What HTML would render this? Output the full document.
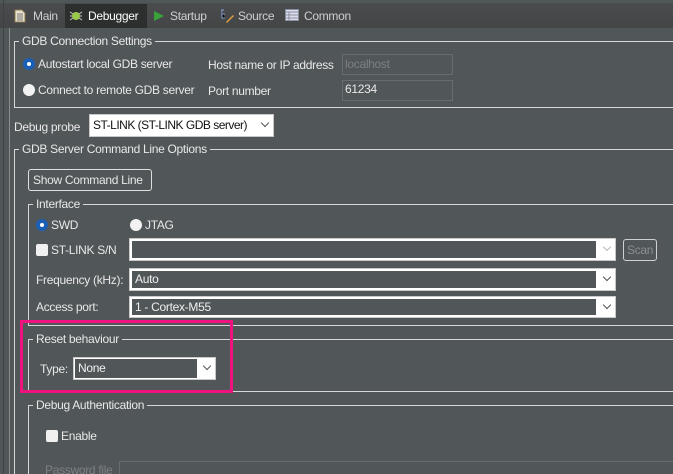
<!DOCTYPE html><html><head><style>
*{margin:0;padding:0;box-sizing:border-box}
html,body{width:673px;height:474px;overflow:hidden}
body{background:#515658;font-family:"Liberation Sans",sans-serif;font-size:12px;letter-spacing:-0.3px;color:#e8e8e8;position:relative}
.a{position:absolute;white-space:nowrap}
.hl{position:absolute;height:1px;background:#d8d8d8}
.vl{position:absolute;width:1px;background:#d8d8d8}
.lg{background:#515658;padding:0 3px}
.combo{position:absolute;background:#fff;border:1px solid #c8c8c8}
.combo .in{position:absolute;left:2px;top:2px;bottom:2px;right:19px;background:#515658;color:#f0f0f0;padding-left:3px;line-height:17px;overflow:hidden}
.combo .ar{position:absolute;right:5px;top:5px;width:6px;height:6px;border-right:1px solid #555;border-bottom:1px solid #555;transform:rotate(45deg)}
.rad{position:absolute;width:12px;height:12px;border-radius:50%;background:#f2f2f2}
.rad.on{background:#1a5fb4}
.rad.on:after{content:"";position:absolute;left:4px;top:4px;width:4px;height:4px;border-radius:50%;background:#fff}
.chk{position:absolute;width:12px;height:12px;border-radius:2px;background:#f0f0f0}
.tf{position:absolute;border:1px solid #686c6e}
</style></head><body>
<div class="a" style="left:0;top:3px;width:673px;height:25px;background:linear-gradient(#4a4c4d,#434546)"></div>
<div class="a" style="left:65px;top:4px;width:82px;height:24px;background:#2d2e2e"></div>
<div class="vl" style="left:3px;top:0;height:474px;background:#3e4244"></div>
<div class="vl" style="left:9px;top:28px;height:446px;background:#8a8d8e"></div>
<svg class="a" style="left:14px;top:9px" width="12" height="14"><path d="M1 1h7l3 3v9H1z" fill="#e8e2cc" stroke="#8a7a50"/><path d="M3 5h6M3 7h6M3 9h6M3 11h6" stroke="#777"/></svg>
<div class="a" style="left:33px;top:9px;color:#cfcfcf">Main</div>
<svg class="a" style="left:69px;top:9px" width="14" height="14"><circle cx="7" cy="7" r="4" fill="#9ac84a"/><path d="M1 3l3 2M13 3l-3 2M1 11l3-2M13 11l-3-2M1 7h2M11 7h2" stroke="#ccc"/></svg>
<div class="a" style="left:88px;top:9px;color:#fff">Debugger</div>
<svg class="a" style="left:153px;top:10px" width="12" height="12"><path d="M1 1l10 5-10 5z" fill="#3aa23a"/></svg>
<div class="a" style="left:170px;top:9px;color:#cfcfcf">Startup</div>
<svg class="a" style="left:219px;top:8px" width="16" height="16"><path d="M2 2h3M3 2v8h3M3 6h3" stroke="#8aa0d0"/><path d="M7 14l7-7 1 1-7 7z" fill="#e0a040"/></svg>
<div class="a" style="left:238px;top:9px;color:#cfcfcf">Source</div>
<svg class="a" style="left:285px;top:9px" width="14" height="12"><rect x="0.5" y="0.5" width="13" height="11" fill="#dde" stroke="#8890a0"/><path d="M1 3h12M4 3v8M1 6h12M1 9h12" stroke="#8890a0"/></svg>
<div class="a" style="left:304px;top:9px;color:#cfcfcf">Common</div>

<div class="hl" style="left:14px;top:41px;width:659px"></div>
<div class="hl" style="left:14px;top:107px;width:659px"></div>
<div class="vl" style="left:14px;top:41px;height:67px"></div>
<div class="a lg" style="left:19px;top:34px">GDB Connection Settings</div>
<div class="rad on" style="left:23px;top:58px"></div>
<div class="a" style="left:38px;top:57px">Autostart local GDB server</div>
<div class="rad" style="left:23px;top:84px"></div>
<div class="a" style="left:38px;top:83px">Connect to remote GDB server</div>
<div class="a" style="left:208px;top:58px">Host name or IP address</div>
<div class="a" style="left:208px;top:84px">Port number</div>
<div class="tf" style="left:342px;top:54px;width:111px;height:21px"></div>
<div class="a" style="left:345px;top:57px;color:#7c8082">localhost</div>
<div class="tf" style="left:342px;top:80px;width:111px;height:21px"></div>
<div class="a" style="left:345px;top:82px">61234</div>

<div class="a" style="left:14px;top:120px">Debug probe</div>
<div class="combo" style="left:89px;top:114px;width:185px;height:23px"><div class="in" style="left:1px;top:1px;bottom:1px;right:18px;background:#fff;color:#111;line-height:19px;padding-left:2px;letter-spacing:-0.5px">ST-LINK (ST-LINK GDB server)</div><div class="ar"></div></div>

<div class="hl" style="left:14px;top:149px;width:659px"></div>
<div class="vl" style="left:14px;top:149px;height:325px"></div>
<div class="a lg" style="left:19px;top:142px">GDB Server Command Line Options</div>
<div class="a" style="left:28px;top:169px;width:124px;height:22px;border:1px solid #e0e0e0;border-radius:3px;padding:3px 0 0 4px">Show Command Line</div>

<div class="hl" style="left:28px;top:204px;width:645px"></div>
<div class="hl" style="left:28px;top:325px;width:645px"></div>
<div class="vl" style="left:28px;top:204px;height:122px"></div>
<div class="a lg" style="left:33px;top:197px">Interface</div>
<div class="rad on" style="left:36px;top:219px"></div>
<div class="a" style="left:51px;top:218px">SWD</div>
<div class="rad" style="left:130px;top:219px"></div>
<div class="a" style="left:145px;top:218px">JTAG</div>
<div class="chk" style="left:36px;top:244px"></div>
<div class="a" style="left:51px;top:243px">ST-LINK S/N</div>
<div class="combo" style="left:129px;top:238px;width:487px;height:23px"><div class="in"></div><div class="ar" style="border-color:#bbb"></div></div>
<div class="a" style="left:623px;top:239px;width:34px;height:22px;border:1px solid #d0d0d0;border-radius:3px;color:#8a8e90;padding:3px 0 0 3px">Scan</div>
<div class="a" style="left:36px;top:273px">Frequency (kHz):</div>
<div class="combo" style="left:129px;top:268px;width:487px;height:23px"><div class="in">Auto</div><div class="ar"></div></div>
<div class="a" style="left:36px;top:300px">Access port:</div>
<div class="combo" style="left:129px;top:296px;width:487px;height:22px"><div class="in">1 - Cortex-M55</div><div class="ar"></div></div>

<div class="hl" style="left:28px;top:339px;width:645px"></div>
<div class="hl" style="left:28px;top:391px;width:645px"></div>
<div class="vl" style="left:28px;top:339px;height:53px"></div>
<div class="a lg" style="left:33px;top:332px">Reset behaviour</div>
<div class="a" style="left:40px;top:362px">Type:</div>
<div class="combo" style="left:73px;top:357px;width:143px;height:23px"><div class="in" style="left:1px;top:1px;bottom:1px;right:18px;line-height:19px">None</div><div class="ar"></div></div>
<div class="a" style="left:20px;top:320px;width:213px;height:73px;border:3px solid #f0127e"></div>

<div class="hl" style="left:28px;top:405px;width:645px"></div>
<div class="vl" style="left:28px;top:405px;height:69px"></div>
<div class="a lg" style="left:33px;top:398px">Debug Authentication</div>
<div class="chk" style="left:46px;top:430px"></div>
<div class="a" style="left:61px;top:429px">Enable</div>
<div class="a" style="left:45px;top:463px;color:#7c8082">Password file</div>
<div class="tf" style="left:119px;top:461px;width:560px;height:13px;border-bottom:none"></div>
</body></html>
